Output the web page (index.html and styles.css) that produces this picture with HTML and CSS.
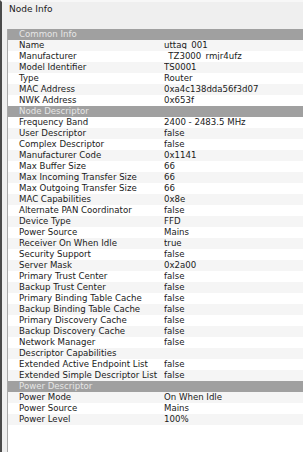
FILE: index.html
```html
<!DOCTYPE html>
<html>
<head>
<meta charset="utf-8">
<link rel="stylesheet" href="styles.css">
</head>
<body>
<div class="window">
  <div class="title">Node Info</div>
  <div class="tree">
    <div class="row hdr"><span class="k">Common Info</span></div>
    <div class="row"><span class="k">Name</span><span class="v">uttag_001</span></div>
    <div class="row"><span class="k">Manufacturer</span><span class="v">_TZ3000_rmjr4ufz</span></div>
    <div class="row"><span class="k">Model Identifier</span><span class="v">TS0001</span></div>
    <div class="row"><span class="k">Type</span><span class="v">Router</span></div>
    <div class="row"><span class="k">MAC Address</span><span class="v">0xa4c138dda56f3d07</span></div>
    <div class="row"><span class="k">NWK Address</span><span class="v">0x653f</span></div>
    <div class="row hdr"><span class="k">Node Descriptor</span></div>
    <div class="row"><span class="k">Frequency Band</span><span class="v">2400 - 2483.5 MHz</span></div>
    <div class="row"><span class="k">User Descriptor</span><span class="v">false</span></div>
    <div class="row"><span class="k">Complex Descriptor</span><span class="v">false</span></div>
    <div class="row"><span class="k">Manufacturer Code</span><span class="v">0x1141</span></div>
    <div class="row"><span class="k">Max Buffer Size</span><span class="v">66</span></div>
    <div class="row"><span class="k">Max Incoming Transfer Size</span><span class="v">66</span></div>
    <div class="row"><span class="k">Max Outgoing Transfer Size</span><span class="v">66</span></div>
    <div class="row"><span class="k">MAC Capabilities</span><span class="v">0x8e</span></div>
    <div class="row"><span class="k">Alternate PAN Coordinator</span><span class="v">false</span></div>
    <div class="row"><span class="k">Device Type</span><span class="v">FFD</span></div>
    <div class="row"><span class="k">Power Source</span><span class="v">Mains</span></div>
    <div class="row"><span class="k">Receiver On When Idle</span><span class="v">true</span></div>
    <div class="row"><span class="k">Security Support</span><span class="v">false</span></div>
    <div class="row"><span class="k">Server Mask</span><span class="v">0x2a00</span></div>
    <div class="row"><span class="k">Primary Trust Center</span><span class="v">false</span></div>
    <div class="row"><span class="k">Backup Trust Center</span><span class="v">false</span></div>
    <div class="row"><span class="k">Primary Binding Table Cache</span><span class="v">false</span></div>
    <div class="row"><span class="k">Backup Binding Table Cache</span><span class="v">false</span></div>
    <div class="row"><span class="k">Primary Discovery Cache</span><span class="v">false</span></div>
    <div class="row"><span class="k">Backup Discovery Cache</span><span class="v">false</span></div>
    <div class="row"><span class="k">Network Manager</span><span class="v">false</span></div>
    <div class="row"><span class="k">Descriptor Capabilities</span><span class="v"></span></div>
    <div class="row"><span class="k">Extended Active Endpoint List</span><span class="v">false</span></div>
    <div class="row"><span class="k">Extended Simple Descriptor List</span><span class="v">false</span></div>
    <div class="row hdr"><span class="k">Power Descriptor</span></div>
    <div class="row"><span class="k">Power Mode</span><span class="v">On When Idle</span></div>
    <div class="row"><span class="k">Power Source</span><span class="v">Mains</span></div>
    <div class="row"><span class="k">Power Level</span><span class="v">100%</span></div>
  </div>
</div>
</body>
</html>
```
FILE: styles.css
```css
html, body {
  margin: 0;
  padding: 0;
  height: 100%;
}
body {
  background: #efefef;
  font-family: "DejaVu Sans", sans-serif;
  font-size: 8.6px;
  color: #1a1a1a;
  overflow: hidden;
}
.window {
  height: 100%;
  box-sizing: border-box;
  border-left: 2px solid #4a4a4a;
  border-top: 2px solid #f7f7f7;
  display: flex;
  flex-direction: column;
}
.title {
  height: 27px;
  padding: 2px 0 0 7px;
  box-sizing: border-box;
  line-height: 11px;
  font-size: 9px;
  color: #202020;
}
.tree {
  flex: 1;
  margin-left: 5px;
  background: #ffffff;
  border-left: 1px solid #a8a8a8;
}
.row {
  display: grid;
  grid-template-columns: 156px 1fr;
  height: 11px;
  line-height: 11px;
  overflow: hidden;
  white-space: nowrap;
}
.row:nth-child(even) {
  background: #f5f5f5;
}
.row .k {
  padding-left: 11px;
  overflow: hidden;
}
.row .v {
  height: 9px;
  overflow: hidden;
}
.row.hdr {
  background: #a0a0a0;
  color: #e6e6e6;
}
```
